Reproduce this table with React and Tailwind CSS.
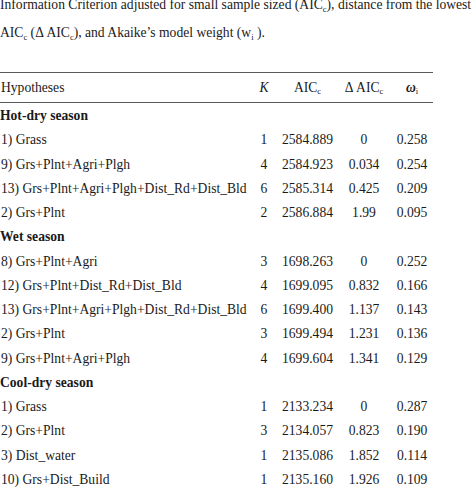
import React from "react";

const Sub = ({ children }) => (
  <span className="relative top-[2.5px] text-[8.5px] leading-none">{children}</span>
);

const groups = [
  {
    title: "Hot-dry season",
    rows: [
      ["1) Grass", "1", "2584.889", "0", "0.258"],
      ["9) Grs+Plnt+Agri+Plgh", "4", "2584.923", "0.034", "0.254"],
      ["13) Grs+Plnt+Agri+Plgh+Dist_Rd+Dist_Bld", "6", "2585.314", "0.425", "0.209"],
      ["2) Grs+Plnt", "2", "2586.884", "1.99", "0.095"],
    ],
  },
  {
    title: "Wet season",
    rows: [
      ["8) Grs+Plnt+Agri", "3", "1698.263", "0", "0.252"],
      ["12) Grs+Plnt+Dist_Rd+Dist_Bld", "4", "1699.095", "0.832", "0.166"],
      ["13) Grs+Plnt+Agri+Plgh+Dist_Rd+Dist_Bld", "6", "1699.400", "1.137", "0.143"],
      ["2) Grs+Plnt", "3", "1699.494", "1.231", "0.136"],
      ["9) Grs+Plnt+Agri+Plgh", "4", "1699.604", "1.341", "0.129"],
    ],
  },
  {
    title: "Cool-dry season",
    rows: [
      ["1) Grass", "1", "2133.234", "0", "0.287"],
      ["2) Grs+Plnt", "3", "2134.057", "0.823", "0.190"],
      ["3) Dist_water", "1", "2135.086", "1.852", "0.114"],
      ["10) Grs+Dist_Build", "1", "2135.160", "1.926", "0.109"],
    ],
  },
];

const cols = "grid grid-cols-[250px_28px_59px_54px_42px] w-[433px]";

const App = () => {
  return (
    <div className="w-[474px] h-[489px] overflow-hidden bg-white text-[#1a1a1a] [font-family:'Liberation_Serif',serif] text-[13.6px]">
      {/* caption */}
      <div className="mt-[-9px] leading-[28px] whitespace-nowrap">
        <div>
          Information Criterion adjusted for small sample sized (AIC<Sub>c</Sub>), distance from the lowest
        </div>
        <div>
          AIC<Sub>c</Sub> (Δ AIC<Sub>c</Sub>), and Akaike’s model weight (w<Sub>i</Sub> ).
        </div>
      </div>

      <div className="mt-[24.5px] w-[433px] border-t border-[#5a5a5a]" />

      {/* header */}
      <div className={`${cols} h-[29px] leading-[29px]`}>
        <div className="pl-px">Hypotheses</div>
        <div className="text-center italic">K</div>
        <div className="text-center">
          AIC<Sub>c</Sub>
        </div>
        <div className="text-center">
          Δ AIC<Sub>c</Sub>
        </div>
        <div className="text-center">
          <span className="italic font-bold">ω</span>
          <Sub>i</Sub>
        </div>
      </div>

      <div className="w-[433px] border-t border-[#5a5a5a]" />

      {/* body */}
      <div className="pt-[1.5px]">
        {groups.map((g) => (
          <div key={g.title}>
            <div className="h-[24.25px] leading-[24.25px] font-bold">{g.title}</div>
            {g.rows.map((r, i) => (
              <div key={i} className={`${cols} h-[24.25px] leading-[24.25px] whitespace-nowrap`}>
                <div className="pl-px">{r[0]}</div>
                <div className="text-center">{r[1]}</div>
                <div className="text-center">{r[2]}</div>
                <div className="text-center">{r[3]}</div>
                <div className="text-center">{r[4]}</div>
              </div>
            ))}
          </div>
        ))}
      </div>
    </div>
  );
};

export default App;
